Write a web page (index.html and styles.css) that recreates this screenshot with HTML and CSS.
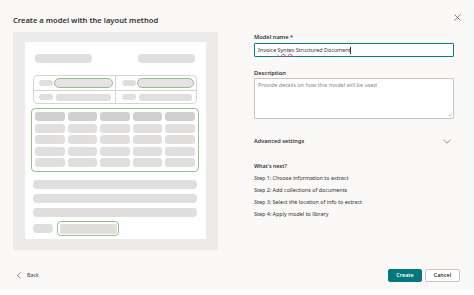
FILE: index.html
```html
<!DOCTYPE html>
<html lang="en">
<head>
    <meta charset="UTF-8">
    <meta name="viewport" content="width=device-width, initial-scale=1.0">
    <title>Create a model with the layout method</title>
    <link rel="stylesheet" href="styles.css">
</head>
<body>
    <div class="dialog">
        <div class="header">
            <h1 class="title">Create a model with the layout method</h1>
            <span class="close">
                <svg width="7" height="7" viewBox="0 0 7 7"><path d="M0.5 0.5 L6.5 6.5 M6.5 0.5 L0.5 6.5" stroke="#605e5c" stroke-width="0.8" fill="none"/></svg>
            </span>
        </div>

        <div class="content">
            <!-- illustration of a document with layout regions -->
            <div class="illus">
                <div class="page">
                    <div class="top-row">
                        <div class="bar w57"></div>
                        <div class="bar w57"></div>
                    </div>

                    <div class="kv-table">
                        <div class="kv-cell"><span class="chip"></span><span class="pill"></span></div>
                        <div class="kv-cell right"><span class="chip"></span><span class="pill"></span></div>
                        <div class="kv-cell bottom"><span class="chip"></span><span class="line"></span></div>
                        <div class="kv-cell right bottom"><span class="chip"></span><span class="line"></span></div>
                    </div>

                    <div class="grid-table" id="gridTable"></div>

                    <div class="bars">
                        <div class="bar"></div>
                        <div class="bar"></div>
                        <div class="bar"></div>
                    </div>

                    <div class="bottom-row">
                        <div class="bar w20"></div>
                        <div class="field-box"><div class="field-fill"></div></div>
                    </div>
                </div>
            </div>

            <div class="form">
                <label class="label">Model name *</label>
                <div class="input">Invoice <span class="typo">Syntex</span> Structured Document<span class="caret"></span></div>

                <label class="label desc-label">Description</label>
                <div class="textarea">
                    <span class="placeholder">Provide details on how this model will be used</span>
                    <svg class="grip" width="4" height="4" viewBox="0 0 4 4"><path d="M3.5 0.5 L0.5 3.5 M3.5 2 L2 3.5" stroke="#a19f9d" stroke-width="0.5"/></svg>
                </div>

                <div class="advanced">
                    <span>Advanced settings</span>
                    <svg width="8" height="5" viewBox="0 0 8 5"><path d="M0.5 0.8 L4 4.2 L7.5 0.8" stroke="#605e5c" stroke-width="0.7" fill="none"/></svg>
                </div>

                <div class="next-title">What's next?</div>
                <div class="step">Step 1: Choose information to extract</div>
                <div class="step">Step 2: Add collections of documents</div>
                <div class="step">Step 3: Select the location of info to extract</div>
                <div class="step">Step 4: Apply model to library</div>
            </div>
        </div>

        <div class="footer">
            <a class="back" href="#">
                <svg width="4" height="7" viewBox="0 0 4 7"><path d="M3.5 0.5 L0.6 3.5 L3.5 6.5" stroke="#605e5c" stroke-width="0.7" fill="none"/></svg>
                Back
            </a>
            <div class="buttons">
                <button class="btn-create">Create</button>
                <button class="btn-cancel">Cancel</button>
            </div>
        </div>
    </div>

    <script>
        // 5x5 のテーブルセルを生成
        const gridTable = document.getElementById('gridTable');
        for (let i = 0; i < 25; i++) {
            const cell = document.createElement('div');
            cell.className = i < 5 ? 'cell head' : 'cell';
            gridTable.appendChild(cell);
        }
    </script>
</body>
</html>
```

FILE: styles.css
```css
body {
    margin: 0;
    background-color: #ffffff;
    font-family: "Noto Sans", sans-serif;
    color: #323130;
}
.dialog {
    width: 472px;
    height: 290px;
    background-color: #faf9f8;
    box-shadow: 0 1px 2px rgba(0, 0, 0, 0.12);
    display: flex;
    flex-direction: column;
}
.header {
    height: 32px;
    box-sizing: border-box;
    padding: 14px 11px 0 13px;
    display: flex;
    align-items: flex-start;
}
.title {
    margin: 0;
    font-size: 7.6px;
    line-height: 12px;
    font-weight: 600;
    color: #323130;
}
.close {
    margin-left: auto;
    display: flex;
}
.content {
    display: flex;
    gap: 36px;
    padding: 0 18px 0 13px;
    height: 218px;
}

/* illustration */
.illus {
    width: 205px;
    height: 218px;
    box-sizing: border-box;
    background-color: #edebe9;
    padding: 10px 12px 11px 12px;
}
.page {
    height: 197px;
    background-color: #ffffff;
    box-sizing: border-box;
    padding: 12px 9px 0 8px;
    display: flex;
    flex-direction: column;
}
.bar {
    height: 9px;
    border-radius: 4px;
    background-color: #e1dfdd;
}
.w57 {
    width: 57px;
}
.w20 {
    width: 20px;
}
.top-row {
    display: flex;
    justify-content: space-between;
    padding: 0 2px;
}
.kv-table {
    margin-top: 12px;
    height: 29px;
    box-sizing: border-box;
    border: 1px solid #d6d4d2;
    border-radius: 4px;
    display: grid;
    grid-template-columns: 81px 1fr;
    grid-template-rows: 14px 1fr;
}
.kv-cell {
    display: flex;
    align-items: center;
    gap: 1px;
    padding: 0 2px 0 5px;
}
.kv-cell.right {
    border-left: 1px solid #d6d4d2;
    padding-left: 6px;
}
.kv-cell.bottom {
    border-top: 1px solid #d6d4d2;
    gap: 3px;
}
.chip {
    width: 14px;
    height: 6px;
    border-radius: 3px;
    background-color: #e1dfdd;
}
.pill {
    flex: 1;
    height: 10px;
    box-sizing: border-box;
    border: 1px solid #8fc28d;
    border-radius: 5px;
    background-color: #e6e4e2;
}
.line {
    flex: 1;
    height: 7px;
    border-radius: 3px;
    background-color: #e1dfdd;
    margin-right: 2px;
}
.grid-table {
    margin: 4px -2px 0 -2px;
    height: 64px;
    box-sizing: border-box;
    border: 1px solid #8fc28d;
    border-radius: 4px;
    padding: 3px 3px 4px 3px;
    display: grid;
    grid-template-columns: repeat(5, 1fr);
    grid-template-rows: repeat(5, 1fr);
    gap: 2.5px 3px;
}
.cell {
    border-radius: 3px;
    background-color: #e1dfdd;
}
.cell.head {
    background-color: #d2d0ce;
}
.bars {
    margin-top: 8px;
    display: flex;
    flex-direction: column;
    gap: 5px;
}
.bottom-row {
    margin-top: 4px;
    display: flex;
    align-items: center;
    gap: 4px;
}
.field-box {
    width: 62px;
    height: 15px;
    box-sizing: border-box;
    border: 1px solid #8fc28d;
    border-radius: 4px;
    padding: 1.5px;
}
.field-fill {
    height: 100%;
    border-radius: 2px;
    background-color: #e1dfdd;
}

/* form */
.form {
    width: 200px;
    padding-top: 1px;
    display: flex;
    flex-direction: column;
}
.label {
    font-size: 5.7px;
    line-height: 8px;
    font-weight: 600;
    color: #323130;
}
.desc-label {
    margin-top: 12px;
}
.input {
    margin-top: 2px;
    height: 14px;
    box-sizing: border-box;
    border: 1px solid #038387;
    border-radius: 1px;
    background-color: #ffffff;
    padding: 0 3px;
    font-size: 5.4px;
    line-height: 12px;
    color: #323130;
    display: flex;
    align-items: center;
    white-space: pre;
}
.typo {
    text-decoration: underline wavy #c239b3;
    text-decoration-thickness: 0.5px;
}
.caret {
    display: inline-block;
    width: 0.6px;
    height: 7px;
    background-color: #323130;
}
.textarea {
    position: relative;
    margin-top: 1px;
    height: 41px;
    box-sizing: border-box;
    border: 1px solid #c8c6c4;
    border-radius: 1px;
    background-color: #ffffff;
    padding: 2px 3px;
    font-size: 5.5px;
    line-height: 8px;
}
.placeholder {
    color: #8a8886;
}
.grip {
    position: absolute;
    right: 1px;
    bottom: 1px;
}
.advanced {
    margin-top: 14px;
    height: 16px;
    display: flex;
    align-items: center;
    justify-content: space-between;
    padding-right: 3px;
    font-size: 5.6px;
    font-weight: 600;
}
.next-title {
    margin-top: 13px;
    font-size: 5.3px;
    line-height: 8px;
    font-weight: 600;
}
.step {
    font-size: 5.4px;
    line-height: 12px;
    color: #323130;
}
.next-title + .step {
    margin-top: 2px;
}

/* footer */
.footer {
    flex: 1;
    box-sizing: border-box;
    padding: 10px 12px 0 17px;
    display: flex;
    align-items: center;
}
.back {
    display: flex;
    align-items: center;
    gap: 6px;
    font-size: 5.3px;
    color: #323130;
    text-decoration: none;
}
.buttons {
    margin-left: auto;
    display: flex;
    gap: 3px;
}
button {
    height: 13px;
    padding: 0;
    border-radius: 2px;
    font-family: "Noto Sans", sans-serif;
    font-size: 5.4px;
    font-weight: 600;
    cursor: pointer;
}
.btn-create {
    width: 34px;
    border: 1px solid #03787c;
    background-color: #03787c;
    color: #ffffff;
}
.btn-cancel {
    width: 35px;
    border: 1px solid #c8c6c4;
    background-color: #ffffff;
    color: #323130;
}
```
